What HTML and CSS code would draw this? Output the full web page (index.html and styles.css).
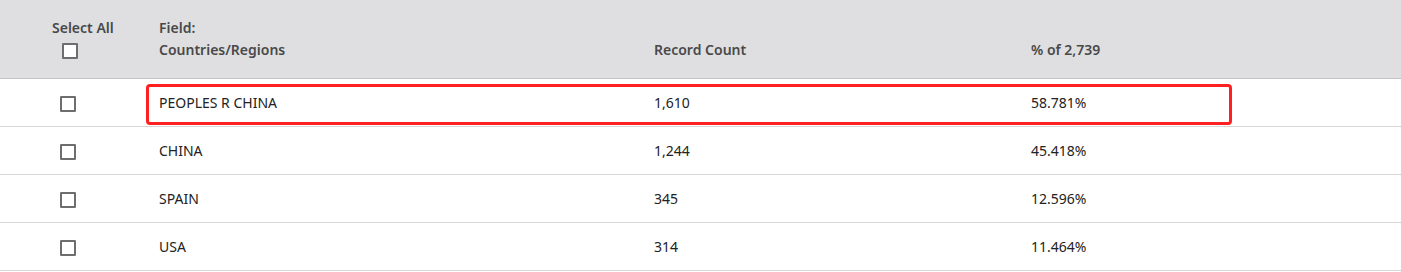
FILE: index.html
```html
<!DOCTYPE html>
<html>
<head>
<meta charset="utf-8">
<link rel="stylesheet" href="styles.css">
</head>
<body>
<div class="table">
  <div class="row head">
    <div class="cell select-all">
      <span class="label">Select All</span>
      <span class="checkbox head-box"></span>
    </div>
    <div class="cell text">Field:<br>Countries/Regions</div>
    <div class="cell text bottom">Record Count</div>
    <div class="cell text bottom">% of 2,739</div>
  </div>
  <div class="row body highlighted">
    <div class="cell check"><span class="checkbox"></span></div>
    <div class="cell text">PEOPLES R CHINA</div>
    <div class="cell text">1,610</div>
    <div class="cell text">58.781%</div>
    <div class="highlight"></div>
  </div>
  <div class="row body">
    <div class="cell check"><span class="checkbox"></span></div>
    <div class="cell text">CHINA</div>
    <div class="cell text">1,244</div>
    <div class="cell text">45.418%</div>
  </div>
  <div class="row body">
    <div class="cell check"><span class="checkbox"></span></div>
    <div class="cell text">SPAIN</div>
    <div class="cell text">345</div>
    <div class="cell text">12.596%</div>
  </div>
  <div class="row body">
    <div class="cell check"><span class="checkbox"></span></div>
    <div class="cell text">USA</div>
    <div class="cell text">314</div>
    <div class="cell text">11.464%</div>
  </div>
</div>
</body>
</html>
```
FILE: styles.css
```css
html, body {
  margin: 0;
  padding: 0;
  background: #ffffff;
}
body {
  font-family: "Noto Sans", "Open Sans", sans-serif;
  font-size: 14px;
  line-height: 22px;
  color: #222222;
}
.table {
  width: 1401px;
}
.row {
  display: grid;
  grid-template-columns: 136px 495px 377px 1fr;
  border-bottom: 1px solid #d6d6d6;
  position: relative;
}
.head {
  background: #dfdfe2;
  height: 78px;
  box-sizing: content-box;
  border-bottom-color: #c4c4c6;
  font-weight: 600;
  color: #494949;
}
.head .cell {
  padding-top: 17px;
  padding-bottom: 17px;
}
.select-all {
  display: flex;
  flex-direction: column;
  align-items: flex-start;
  padding-left: 52px;
}
.head-box {
  margin-left: 10px;
  margin-top: 4px;
}
.cell.text {
  padding-left: 23px;
}
.head .bottom {
  align-self: end;
}
.body {
  height: 47px;
  align-items: center;
}
.check {
  display: flex;
  justify-content: center;
  padding-top: 2px;
}
.checkbox {
  display: block;
  width: 16px;
  height: 16px;
  box-sizing: border-box;
  border: 2px solid #6e6e6e;
  border-radius: 1px;
  background: #ffffff;
}
.highlight {
  position: absolute;
  left: 146px;
  top: 5px;
  width: 1086px;
  height: 41px;
  box-sizing: border-box;
  border: 3px solid #ff2121;
  border-radius: 4px;
  pointer-events: none;
}
```
